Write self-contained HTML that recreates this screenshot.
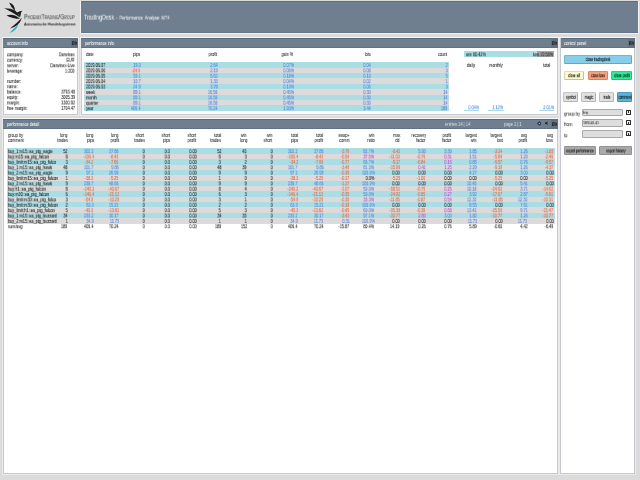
<!DOCTYPE html><html><head><meta charset="utf-8"><style>
html,body{margin:0;padding:0;width:640px;height:480px;overflow:hidden;background:#dcdbdb;font-family:"Liberation Sans", sans-serif;}
.b{position:absolute;}
.t{position:absolute;top:0;white-space:nowrap;line-height:8px;height:8px;will-change:transform;-webkit-text-stroke:0.05px currentColor;}
.r{text-align:right;}
.c{text-align:center;}
</style></head><body>
<div class="b" style="left:80px;top:1px;width:559px;height:33px;background:#f2f2f2"></div>
<div class="b" style="left:81px;top:1px;width:557px;height:32px;background:#6f7f8f"></div>
<div class="b" style="left:81px;top:1px;width:557px;height:1px;background:#607080"></div>
<div class="b" style="left:81px;top:32px;width:557px;height:1px;background:#66768a"></div>
<div class="t" style="left:84.2px;color:#eef0f2;font-size:8.1px;transform:translateY(13.60px) scaleX(0.66);transform-origin:0 50%;-webkit-text-stroke:0.05px currentColor;">TradingDesk</div>
<div class="t" style="left:116.2px;color:#eef0f2;font-size:5.9px;transform:translateY(13.60px) scaleX(0.7);transform-origin:0 50%;-webkit-text-stroke:0.05px currentColor;word-spacing:1.2px">-&nbsp;Performance Analyse MT4</div>
<svg class="b" style="left:2px;top:0px" width="24" height="36" viewBox="0 0 320 480">
<path d="M95,33 Q178,60 172,148 Q118,96 95,33Z" fill="#1c1c1c"/>
<path d="M31,111 Q208,108 240,234 Q168,182 31,111Z" fill="#1c1c1c"/>
<path d="M59,205 Q160,176 240,250 Q144,250 59,205Z" fill="#1c1c1c"/>
<path d="M200,166 Q236,142 272,142 Q252,160 250,188 Q248,212 240,232 Q228,196 200,166Z" fill="#1c1c1c"/>
<path d="M266,238 Q200,310 106,380 Q232,352 266,238Z" fill="#1c1c1c"/>
<path d="M218,328 Q160,378 100,440 Q192,414 218,328Z" fill="#20aebf"/>
</svg>
<div class="t" style="left:24.1px;color:#484848;font-size:6.9px;transform:translateY(13.20px) scaleX(0.78);transform-origin:0 50%;-webkit-text-stroke:0.05px currentColor;">P<span style="font-size:4.6px">HOENIX</span>T<span style="font-size:4.6px">RADING</span>/G<span style="font-size:4.6px">ROUP</span></div>
<div class="t" style="left:24.2px;color:#1a1a1a;font-size:4.2px;transform:translateY(20.50px) scaleX(0.895);transform-origin:0 50%;-webkit-text-stroke:0.08px #1a1a1a;">Automatische Handelssysteme</div>
<div class="b" style="left:2px;top:37px;width:77px;height:79px;background:#eaeaea"></div>
<div class="b" style="left:2px;top:37px;width:77px;height:1px;background:#f6f6f6"></div>
<div class="b" style="left:3px;top:38px;width:75px;height:77px;background:#fff;box-sizing:border-box;border:1px solid #c6cad0"></div>
<div class="b" style="left:3px;top:38px;width:75px;height:9.5px;background:#6f7f8f"></div>
<div class="b" style="left:3px;top:38px;width:75px;height:1px;background:#5b6a7b"></div>
<div class="b" style="left:3px;top:46.6px;width:75px;height:0.9px;background:#627182"></div>
<div class="t" style="left:7px;color:#f2f5f8;font-size:5.4px;transform:translateY(39.00px) scaleX(0.715);transform-origin:0 50%;-webkit-text-stroke:0.04px currentColor;">account info</div>
<div class="b" style="left:71px;top:38px;width:7px;height:9.5px;background:#627080"></div>
<svg class="b" style="left:71.6px;top:40.9px" width="5" height="4.3" viewBox="0 0 5.5 5" preserveAspectRatio="none"><path d="M0.5 4.5V0.6h1.8l0.5 0.6h2v1" fill="none" stroke="#15191e" stroke-width="0.75"/><path d="M0.5 4.5L1.3 2.2H5.2L4.4 4.5Z" fill="#56636f" stroke="#15191e" stroke-width="0.7"/></svg>
<div class="t" style="left:7px;color:#151515;font-size:5.0px;transform:translateY(50.30px) scaleX(0.77);transform-origin:0 50%;">company:</div>
<div class="t r" style="right:565.00px;color:#151515;font-size:5.0px;transform:translateY(50.30px) scaleX(0.77);transform-origin:100% 50%;">Darwinex</div>
<div class="t" style="left:7px;color:#151515;font-size:5.0px;transform:translateY(55.70px) scaleX(0.77);transform-origin:0 50%;">currency:</div>
<div class="t r" style="right:565.00px;color:#151515;font-size:5.0px;transform:translateY(55.70px) scaleX(0.77);transform-origin:100% 50%;">EUR</div>
<div class="t" style="left:7px;color:#151515;font-size:5.0px;transform:translateY(61.20px) scaleX(0.77);transform-origin:0 50%;">server:</div>
<div class="t r" style="right:565.00px;color:#151515;font-size:5.0px;transform:translateY(61.20px) scaleX(0.77);transform-origin:100% 50%;">Darwinex-Live</div>
<div class="t" style="left:7px;color:#151515;font-size:5.0px;transform:translateY(66.70px) scaleX(0.77);transform-origin:0 50%;">leverage:</div>
<div class="t r" style="right:565.00px;color:#151515;font-size:5.0px;transform:translateY(66.70px) scaleX(0.77);transform-origin:100% 50%;">1:200</div>
<div class="t" style="left:7px;color:#151515;font-size:5.0px;transform:translateY(77.00px) scaleX(0.77);transform-origin:0 50%;">number:</div>
<div class="t" style="left:7px;color:#151515;font-size:5.0px;transform:translateY(82.20px) scaleX(0.77);transform-origin:0 50%;">name:</div>
<div class="t" style="left:7px;color:#151515;font-size:5.0px;transform:translateY(87.60px) scaleX(0.77);transform-origin:0 50%;">balance:</div>
<div class="t r" style="right:565.00px;color:#151515;font-size:5.0px;transform:translateY(87.60px) scaleX(0.77);transform-origin:100% 50%;">3793.48</div>
<div class="t" style="left:7px;color:#151515;font-size:5.0px;transform:translateY(93.00px) scaleX(0.77);transform-origin:0 50%;">equity:</div>
<div class="t r" style="right:565.00px;color:#151515;font-size:5.0px;transform:translateY(93.00px) scaleX(0.77);transform-origin:100% 50%;">3005.39</div>
<div class="t" style="left:7px;color:#151515;font-size:5.0px;transform:translateY(98.50px) scaleX(0.77);transform-origin:0 50%;">margin:</div>
<div class="t r" style="right:565.00px;color:#151515;font-size:5.0px;transform:translateY(98.50px) scaleX(0.77);transform-origin:100% 50%;">1300.92</div>
<div class="t" style="left:7px;color:#151515;font-size:5.0px;transform:translateY(104.00px) scaleX(0.77);transform-origin:0 50%;">free margin:</div>
<div class="t r" style="right:565.00px;color:#151515;font-size:5.0px;transform:translateY(104.00px) scaleX(0.77);transform-origin:100% 50%;">1704.47</div>
<div class="b" style="left:80px;top:37px;width:479px;height:79px;background:#eaeaea"></div>
<div class="b" style="left:80px;top:37px;width:479px;height:1px;background:#f6f6f6"></div>
<div class="b" style="left:81px;top:38px;width:477px;height:77px;background:#fff;box-sizing:border-box;border:1px solid #c6cad0"></div>
<div class="b" style="left:81px;top:38px;width:477px;height:9.5px;background:#6f7f8f"></div>
<div class="b" style="left:81px;top:38px;width:477px;height:1px;background:#5b6a7b"></div>
<div class="b" style="left:81px;top:46.6px;width:477px;height:0.9px;background:#627182"></div>
<div class="t" style="left:85px;color:#f2f5f8;font-size:5.4px;transform:translateY(39.00px) scaleX(0.715);transform-origin:0 50%;-webkit-text-stroke:0.04px currentColor;">performance info</div>
<div class="b" style="left:551px;top:38px;width:7px;height:9.5px;background:#627080"></div>
<svg class="b" style="left:551.6px;top:40.9px" width="5" height="4.3" viewBox="0 0 5.5 5" preserveAspectRatio="none"><path d="M0.5 4.5V0.6h1.8l0.5 0.6h2v1" fill="none" stroke="#15191e" stroke-width="0.75"/><path d="M0.5 4.5L1.3 2.2H5.2L4.4 4.5Z" fill="#56636f" stroke="#15191e" stroke-width="0.7"/></svg>
<div class="t" style="left:85.5px;color:#2a2a2a;font-size:5.0px;transform:translateY(50.00px) scaleX(0.77);transform-origin:0 50%;">date</div>
<div class="t r" style="right:499.40px;color:#2a2a2a;font-size:5.0px;transform:translateY(50.00px) scaleX(0.77);transform-origin:100% 50%;">pips</div>
<div class="t r" style="right:422.70px;color:#2a2a2a;font-size:5.0px;transform:translateY(50.00px) scaleX(0.77);transform-origin:100% 50%;">profit</div>
<div class="t r" style="right:346.30px;color:#2a2a2a;font-size:5.0px;transform:translateY(50.00px) scaleX(0.77);transform-origin:100% 50%;">gain %</div>
<div class="t r" style="right:269.50px;color:#2a2a2a;font-size:5.0px;transform:translateY(50.00px) scaleX(0.77);transform-origin:100% 50%;">lots</div>
<div class="t r" style="right:192.50px;color:#2a2a2a;font-size:5.0px;transform:translateY(50.00px) scaleX(0.77);transform-origin:100% 50%;">count</div>
<div class="b" style="left:84px;top:62.25px;width:365.25px;height:5.4px;background:#aadde4"></div>
<div class="b" style="left:84px;top:67.65px;width:365.25px;height:5.4px;background:#dcdada"></div>
<div class="b" style="left:84px;top:73.05px;width:365.25px;height:5.4px;background:#aadde4"></div>
<div class="b" style="left:84px;top:78.45px;width:365.25px;height:5.4px;background:#dcdada"></div>
<div class="b" style="left:84px;top:83.85px;width:365.25px;height:5.4px;background:#aadde4"></div>
<div class="b" style="left:84px;top:89.25px;width:365.25px;height:5.4px;background:#dcdada"></div>
<div class="b" style="left:84px;top:94.65px;width:365.25px;height:5.4px;background:#aadde4"></div>
<div class="b" style="left:84px;top:100.05px;width:365.25px;height:5.4px;background:#dcdada"></div>
<div class="b" style="left:84px;top:105.45px;width:365.25px;height:5.4px;background:#aadde4"></div>
<div class="t" style="left:85.5px;color:#151515;font-size:5.0px;transform:translateY(60.95px) scaleX(0.77);transform-origin:0 50%;">2019.06.07</div>
<div class="t r" style="right:499.40px;color:#4a7ddb;font-size:5.0px;transform:translateY(60.95px) scaleX(0.77);transform-origin:100% 50%;">19.0</div>
<div class="t r" style="right:422.70px;color:#4a7ddb;font-size:5.0px;transform:translateY(60.95px) scaleX(0.77);transform-origin:100% 50%;">2.64</div>
<div class="t r" style="right:346.30px;color:#4a7ddb;font-size:5.0px;transform:translateY(60.95px) scaleX(0.77);transform-origin:100% 50%;">0.07%</div>
<div class="t r" style="right:269.50px;color:#4a7ddb;font-size:5.0px;transform:translateY(60.95px) scaleX(0.77);transform-origin:100% 50%;">0.04</div>
<div class="t r" style="right:192.50px;color:#4a7ddb;font-size:5.0px;transform:translateY(60.95px) scaleX(0.77);transform-origin:100% 50%;">2</div>
<div class="t" style="left:85.5px;color:#151515;font-size:5.0px;transform:translateY(66.35px) scaleX(0.77);transform-origin:0 50%;">2019.06.06</div>
<div class="t r" style="right:499.40px;color:#e8603a;font-size:5.0px;transform:translateY(66.35px) scaleX(0.77);transform-origin:100% 50%;">-24.6</div>
<div class="t r" style="right:422.70px;color:#4a7ddb;font-size:5.0px;transform:translateY(66.35px) scaleX(0.77);transform-origin:100% 50%;">2.19</div>
<div class="t r" style="right:346.30px;color:#4a7ddb;font-size:5.0px;transform:translateY(66.35px) scaleX(0.77);transform-origin:100% 50%;">0.06%</div>
<div class="t r" style="right:269.50px;color:#4a7ddb;font-size:5.0px;transform:translateY(66.35px) scaleX(0.77);transform-origin:100% 50%;">0.08</div>
<div class="t r" style="right:192.50px;color:#4a7ddb;font-size:5.0px;transform:translateY(66.35px) scaleX(0.77);transform-origin:100% 50%;">3</div>
<div class="t" style="left:85.5px;color:#151515;font-size:5.0px;transform:translateY(71.75px) scaleX(0.77);transform-origin:0 50%;">2019.06.05</div>
<div class="t r" style="right:499.40px;color:#4a7ddb;font-size:5.0px;transform:translateY(71.75px) scaleX(0.77);transform-origin:100% 50%;">59.1</div>
<div class="t r" style="right:422.70px;color:#4a7ddb;font-size:5.0px;transform:translateY(71.75px) scaleX(0.77);transform-origin:100% 50%;">6.62</div>
<div class="t r" style="right:346.30px;color:#4a7ddb;font-size:5.0px;transform:translateY(71.75px) scaleX(0.77);transform-origin:100% 50%;">0.18%</div>
<div class="t r" style="right:269.50px;color:#4a7ddb;font-size:5.0px;transform:translateY(71.75px) scaleX(0.77);transform-origin:100% 50%;">0.10</div>
<div class="t r" style="right:192.50px;color:#4a7ddb;font-size:5.0px;transform:translateY(71.75px) scaleX(0.77);transform-origin:100% 50%;">5</div>
<div class="t" style="left:85.5px;color:#151515;font-size:5.0px;transform:translateY(77.15px) scaleX(0.77);transform-origin:0 50%;">2019.06.04</div>
<div class="t r" style="right:499.40px;color:#4a7ddb;font-size:5.0px;transform:translateY(77.15px) scaleX(0.77);transform-origin:100% 50%;">10.7</div>
<div class="t r" style="right:422.70px;color:#4a7ddb;font-size:5.0px;transform:translateY(77.15px) scaleX(0.77);transform-origin:100% 50%;">1.33</div>
<div class="t r" style="right:346.30px;color:#4a7ddb;font-size:5.0px;transform:translateY(77.15px) scaleX(0.77);transform-origin:100% 50%;">0.04%</div>
<div class="t r" style="right:269.50px;color:#4a7ddb;font-size:5.0px;transform:translateY(77.15px) scaleX(0.77);transform-origin:100% 50%;">0.02</div>
<div class="t r" style="right:192.50px;color:#4a7ddb;font-size:5.0px;transform:translateY(77.15px) scaleX(0.77);transform-origin:100% 50%;">1</div>
<div class="t" style="left:85.5px;color:#151515;font-size:5.0px;transform:translateY(82.55px) scaleX(0.77);transform-origin:0 50%;">2019.06.03</div>
<div class="t r" style="right:499.40px;color:#4a7ddb;font-size:5.0px;transform:translateY(82.55px) scaleX(0.77);transform-origin:100% 50%;">24.9</div>
<div class="t r" style="right:422.70px;color:#4a7ddb;font-size:5.0px;transform:translateY(82.55px) scaleX(0.77);transform-origin:100% 50%;">3.78</div>
<div class="t r" style="right:346.30px;color:#4a7ddb;font-size:5.0px;transform:translateY(82.55px) scaleX(0.77);transform-origin:100% 50%;">0.10%</div>
<div class="t r" style="right:269.50px;color:#4a7ddb;font-size:5.0px;transform:translateY(82.55px) scaleX(0.77);transform-origin:100% 50%;">0.06</div>
<div class="t r" style="right:192.50px;color:#4a7ddb;font-size:5.0px;transform:translateY(82.55px) scaleX(0.77);transform-origin:100% 50%;">3</div>
<div class="t" style="left:85.5px;color:#151515;font-size:5.0px;transform:translateY(87.95px) scaleX(0.77);transform-origin:0 50%;">week</div>
<div class="t r" style="right:499.40px;color:#4a7ddb;font-size:5.0px;transform:translateY(87.95px) scaleX(0.77);transform-origin:100% 50%;">89.1</div>
<div class="t r" style="right:422.70px;color:#4a7ddb;font-size:5.0px;transform:translateY(87.95px) scaleX(0.77);transform-origin:100% 50%;">16.56</div>
<div class="t r" style="right:346.30px;color:#4a7ddb;font-size:5.0px;transform:translateY(87.95px) scaleX(0.77);transform-origin:100% 50%;">0.45%</div>
<div class="t r" style="right:269.50px;color:#4a7ddb;font-size:5.0px;transform:translateY(87.95px) scaleX(0.77);transform-origin:100% 50%;">0.30</div>
<div class="t r" style="right:192.50px;color:#4a7ddb;font-size:5.0px;transform:translateY(87.95px) scaleX(0.77);transform-origin:100% 50%;">14</div>
<div class="t" style="left:85.5px;color:#151515;font-size:5.0px;transform:translateY(93.35px) scaleX(0.77);transform-origin:0 50%;">month</div>
<div class="t r" style="right:499.40px;color:#4a7ddb;font-size:5.0px;transform:translateY(93.35px) scaleX(0.77);transform-origin:100% 50%;">89.1</div>
<div class="t r" style="right:422.70px;color:#4a7ddb;font-size:5.0px;transform:translateY(93.35px) scaleX(0.77);transform-origin:100% 50%;">16.56</div>
<div class="t r" style="right:346.30px;color:#4a7ddb;font-size:5.0px;transform:translateY(93.35px) scaleX(0.77);transform-origin:100% 50%;">0.45%</div>
<div class="t r" style="right:269.50px;color:#4a7ddb;font-size:5.0px;transform:translateY(93.35px) scaleX(0.77);transform-origin:100% 50%;">0.30</div>
<div class="t r" style="right:192.50px;color:#4a7ddb;font-size:5.0px;transform:translateY(93.35px) scaleX(0.77);transform-origin:100% 50%;">14</div>
<div class="t" style="left:85.5px;color:#151515;font-size:5.0px;transform:translateY(98.75px) scaleX(0.77);transform-origin:0 50%;">quarter</div>
<div class="t r" style="right:499.40px;color:#4a7ddb;font-size:5.0px;transform:translateY(98.75px) scaleX(0.77);transform-origin:100% 50%;">89.1</div>
<div class="t r" style="right:422.70px;color:#4a7ddb;font-size:5.0px;transform:translateY(98.75px) scaleX(0.77);transform-origin:100% 50%;">16.56</div>
<div class="t r" style="right:346.30px;color:#4a7ddb;font-size:5.0px;transform:translateY(98.75px) scaleX(0.77);transform-origin:100% 50%;">0.45%</div>
<div class="t r" style="right:269.50px;color:#4a7ddb;font-size:5.0px;transform:translateY(98.75px) scaleX(0.77);transform-origin:100% 50%;">0.30</div>
<div class="t r" style="right:192.50px;color:#4a7ddb;font-size:5.0px;transform:translateY(98.75px) scaleX(0.77);transform-origin:100% 50%;">14</div>
<div class="t" style="left:85.5px;color:#151515;font-size:5.0px;transform:translateY(104.15px) scaleX(0.77);transform-origin:0 50%;">year</div>
<div class="t r" style="right:499.40px;color:#4a7ddb;font-size:5.0px;transform:translateY(104.15px) scaleX(0.77);transform-origin:100% 50%;">406.4</div>
<div class="t r" style="right:422.70px;color:#4a7ddb;font-size:5.0px;transform:translateY(104.15px) scaleX(0.77);transform-origin:100% 50%;">70.24</div>
<div class="t r" style="right:346.30px;color:#4a7ddb;font-size:5.0px;transform:translateY(104.15px) scaleX(0.77);transform-origin:100% 50%;">1.93%</div>
<div class="t r" style="right:269.50px;color:#4a7ddb;font-size:5.0px;transform:translateY(104.15px) scaleX(0.77);transform-origin:100% 50%;">3.44</div>
<div class="t r" style="right:192.50px;color:#4a7ddb;font-size:5.0px;transform:translateY(104.15px) scaleX(0.77);transform-origin:100% 50%;">189</div>
<div class="b" style="left:463.75px;top:51.2px;width:90.1px;height:6.1px;background:#a9a9a9"></div>
<div class="b" style="left:463.75px;top:51.2px;width:73.0px;height:6.1px;background:#aadde4"></div>
<div class="t" style="left:465.5px;color:#151515;font-size:5.0px;transform:translateY(50.30px) scaleX(0.77);transform-origin:0 50%;">win 80.42%</div>
<div class="t r" style="right:86.50px;color:#151515;font-size:5.0px;transform:translateY(50.30px) scaleX(0.77);transform-origin:100% 50%;">lost 19.58%</div>
<div class="t c" style="left:420.70px;width:100px;color:#151515;font-size:5.0px;transform:translateY(60.90px) scaleX(0.77);transform-origin:50% 50%;">daily</div>
<div class="t c" style="left:446.00px;width:100px;color:#151515;font-size:5.0px;transform:translateY(60.90px) scaleX(0.77);transform-origin:50% 50%;">monthly</div>
<div class="t r" style="right:90.00px;color:#151515;font-size:5.0px;transform:translateY(60.90px) scaleX(0.77);transform-origin:100% 50%;">total</div>
<div class="t r" style="right:160.80px;color:#4a7ddb;font-size:5.0px;transform:translateY(103.30px) scaleX(0.77);transform-origin:100% 50%;">0.04%</div>
<div class="t r" style="right:136.60px;color:#4a7ddb;font-size:5.0px;transform:translateY(103.30px) scaleX(0.77);transform-origin:100% 50%;">1.12%</div>
<div class="t r" style="right:85.80px;color:#4a7ddb;font-size:5.0px;transform:translateY(103.30px) scaleX(0.77);transform-origin:100% 50%;">2.01%</div>
<div class="b" style="left:463.75px;top:109.6px;width:15.5px;height:0.6px;background:#a9dbe6"></div>
<div class="b" style="left:488px;top:109.6px;width:15.5px;height:0.6px;background:#a9dbe6"></div>
<div class="b" style="left:538.5px;top:109.6px;width:15.5px;height:0.6px;background:#a9dbe6"></div>
<div class="b" style="left:559px;top:37px;width:77px;height:438px;background:#eaeaea"></div>
<div class="b" style="left:559px;top:37px;width:77px;height:1px;background:#f6f6f6"></div>
<div class="b" style="left:560px;top:38px;width:75px;height:436px;background:#fff;box-sizing:border-box;border:1px solid #c6cad0"></div>
<div class="b" style="left:561px;top:38px;width:74px;height:9.5px;background:#6f7f8f"></div>
<div class="b" style="left:561px;top:38px;width:74px;height:1px;background:#5b6a7b"></div>
<div class="b" style="left:561px;top:46.6px;width:74px;height:0.9px;background:#627182"></div>
<div class="t" style="left:564px;color:#f2f5f8;font-size:5.4px;transform:translateY(39.00px) scaleX(0.715);transform-origin:0 50%;-webkit-text-stroke:0.04px currentColor;">control panel</div>
<div class="b" style="left:628px;top:38px;width:7px;height:9.5px;background:#627080"></div>
<svg class="b" style="left:628.6px;top:40.9px" width="5" height="4.3" viewBox="0 0 5.5 5" preserveAspectRatio="none"><path d="M0.5 4.5V0.6h1.8l0.5 0.6h2v1" fill="none" stroke="#15191e" stroke-width="0.75"/><path d="M0.5 4.5L1.3 2.2H5.2L4.4 4.5Z" fill="#56636f" stroke="#15191e" stroke-width="0.7"/></svg>
<div class="b" style="left:563.7px;top:54.7px;width:68.09999999999991px;height:9.199999999999996px;background:#87ceeb;box-sizing:border-box;border:1px solid #6aa6c2;border-top-color:rgba(0,0,0,0.12);border-left-color:rgba(0,0,0,0.15);border-radius:1.2px"></div>
<div class="t c" style="left:547.75px;width:100px;color:#151515;font-size:4.9px;transform:translateY(56.10px) scaleX(0.65);transform-origin:50% 50%;-webkit-text-stroke:0.12px currentColor;">close tradingdesk</div>
<div class="b" style="left:563.7px;top:70.6px;width:20.5px;height:9.600000000000009px;background:#fffacd;box-sizing:border-box;border:1px solid #c0c0b0;border-top-color:rgba(0,0,0,0.12);border-left-color:rgba(0,0,0,0.15);border-radius:1.2px"></div>
<div class="t c" style="left:523.95px;width:100px;color:#151515;font-size:4.9px;transform:translateY(72.20px) scaleX(0.65);transform-origin:50% 50%;-webkit-text-stroke:0.12px currentColor;">close all</div>
<div class="b" style="left:587.6px;top:70.6px;width:20.5px;height:9.600000000000009px;background:#f8a07a;box-sizing:border-box;border:1px solid #c08a70;border-top-color:rgba(0,0,0,0.12);border-left-color:rgba(0,0,0,0.15);border-radius:1.2px"></div>
<div class="t c" style="left:547.85px;width:100px;color:#151515;font-size:4.9px;transform:translateY(72.20px) scaleX(0.65);transform-origin:50% 50%;-webkit-text-stroke:0.12px currentColor;">close loss</div>
<div class="b" style="left:611.2px;top:70.6px;width:20.59999999999991px;height:9.600000000000009px;background:#2eec96;box-sizing:border-box;border:1px solid #40b080;border-top-color:rgba(0,0,0,0.12);border-left-color:rgba(0,0,0,0.15);border-radius:1.2px"></div>
<div class="t c" style="left:571.50px;width:100px;color:#151515;font-size:4.9px;transform:translateY(72.20px) scaleX(0.65);transform-origin:50% 50%;-webkit-text-stroke:0.12px currentColor;">close profit</div>
<div class="b" style="left:563.3px;top:92.3px;width:14.900000000000091px;height:9.5px;background:#e2e2e2;box-sizing:border-box;border:1px solid #b4b4b4;border-top-color:rgba(0,0,0,0.12);border-left-color:rgba(0,0,0,0.15);border-radius:1.2px"></div>
<div class="t c" style="left:520.75px;width:100px;color:#151515;font-size:4.9px;transform:translateY(93.85px) scaleX(0.65);transform-origin:50% 50%;-webkit-text-stroke:0.12px currentColor;">symbol</div>
<div class="b" style="left:581.2px;top:92.3px;width:14.599999999999909px;height:9.5px;background:#e2e2e2;box-sizing:border-box;border:1px solid #b4b4b4;border-top-color:rgba(0,0,0,0.12);border-left-color:rgba(0,0,0,0.15);border-radius:1.2px"></div>
<div class="t c" style="left:538.50px;width:100px;color:#151515;font-size:4.9px;transform:translateY(93.85px) scaleX(0.65);transform-origin:50% 50%;-webkit-text-stroke:0.12px currentColor;">magic</div>
<div class="b" style="left:599.3px;top:92.3px;width:14.600000000000023px;height:9.5px;background:#e2e2e2;box-sizing:border-box;border:1px solid #b4b4b4;border-top-color:rgba(0,0,0,0.12);border-left-color:rgba(0,0,0,0.15);border-radius:1.2px"></div>
<div class="t c" style="left:556.60px;width:100px;color:#151515;font-size:4.9px;transform:translateY(93.85px) scaleX(0.65);transform-origin:50% 50%;-webkit-text-stroke:0.12px currentColor;">trade</div>
<div class="b" style="left:617.25px;top:92.3px;width:14.549999999999955px;height:9.5px;background:#58b2dc;box-sizing:border-box;border:1px solid #4a94b8;border-top-color:rgba(0,0,0,0.12);border-left-color:rgba(0,0,0,0.15);border-radius:1.2px"></div>
<div class="t c" style="left:574.52px;width:100px;color:#151515;font-size:4.9px;transform:translateY(93.85px) scaleX(0.65);transform-origin:50% 50%;-webkit-text-stroke:0.12px currentColor;">comment</div>
<div class="t" style="left:563.6px;color:#333;font-size:5.4px;transform:translateY(109.60px) scaleX(0.77);transform-origin:0 50%;">group by</div>
<div class="b" style="left:581.6px;top:108.9px;width:41.3px;height:7.5px;background:#dedede;box-sizing:border-box;border:0.6px solid #a8a8a8;border-radius:1px"></div>
<div class="t" style="left:582.9px;color:#151515;font-size:4.3px;transform:translateY(108.65px) scaleX(0.74);transform-origin:0 50%;">buy</div>
<div class="b" style="left:626.1px;top:109.60000000000001px;width:4.8px;height:5.3px;background:#f0f0f0;box-sizing:border-box;border:1.1px solid #2a2a2a;border-radius:0.6px"></div>
<div class="b" style="left:628.05px;top:111.2px;width:0.9px;height:2.1px;background:#333"></div>
<div class="t" style="left:563.6px;color:#333;font-size:5.4px;transform:translateY(120.10px) scaleX(0.77);transform-origin:0 50%;">from</div>
<div class="b" style="left:581.6px;top:119.4px;width:41.3px;height:7.5px;background:#dedede;box-sizing:border-box;border:0.6px solid #a8a8a8;border-radius:1px"></div>
<div class="t" style="left:582.9px;color:#151515;font-size:4.3px;transform:translateY(119.15px) scaleX(0.74);transform-origin:0 50%;">1970.01.01</div>
<div class="b" style="left:626.1px;top:120.10000000000001px;width:4.8px;height:5.3px;background:#f0f0f0;box-sizing:border-box;border:1.1px solid #2a2a2a;border-radius:0.6px"></div>
<div class="b" style="left:628.05px;top:121.7px;width:0.9px;height:2.1px;background:#333"></div>
<div class="t" style="left:563.6px;color:#333;font-size:5.4px;transform:translateY(131.30px) scaleX(0.77);transform-origin:0 50%;">to</div>
<div class="b" style="left:581.6px;top:130.2px;width:41.3px;height:7.5px;background:#dedede;box-sizing:border-box;border:0.6px solid #a8a8a8;border-radius:1px"></div>
<div class="b" style="left:626.1px;top:130.89999999999998px;width:4.8px;height:5.3px;background:#f0f0f0;box-sizing:border-box;border:1.1px solid #2a2a2a;border-radius:0.6px"></div>
<div class="b" style="left:628.05px;top:132.5px;width:0.9px;height:2.1px;background:#333"></div>
<div class="b" style="left:563.9px;top:145.9px;width:31.899999999999977px;height:9.5px;background:#a9a9a9;box-sizing:border-box;border:1px solid #909090;border-top-color:rgba(0,0,0,0.12);border-left-color:rgba(0,0,0,0.15);border-radius:1.2px"></div>
<div class="t c" style="left:529.85px;width:100px;color:#151515;font-size:4.9px;transform:translateY(147.45px) scaleX(0.65);transform-origin:50% 50%;-webkit-text-stroke:0.12px currentColor;">export performance</div>
<div class="b" style="left:599.3px;top:145.9px;width:32.60000000000002px;height:9.5px;background:#a9a9a9;box-sizing:border-box;border:1px solid #909090;border-top-color:rgba(0,0,0,0.12);border-left-color:rgba(0,0,0,0.15);border-radius:1.2px"></div>
<div class="t c" style="left:565.60px;width:100px;color:#151515;font-size:4.9px;transform:translateY(147.45px) scaleX(0.65);transform-origin:50% 50%;-webkit-text-stroke:0.12px currentColor;">export history</div>
<div class="b" style="left:2px;top:118px;width:557px;height:357px;background:#eaeaea"></div>
<div class="b" style="left:2px;top:118px;width:557px;height:1px;background:#f6f6f6"></div>
<div class="b" style="left:3px;top:119px;width:555px;height:355px;background:#fff;box-sizing:border-box;border:1px solid #c6cad0"></div>
<div class="b" style="left:3px;top:119px;width:555px;height:9.5px;background:#6f7f8f"></div>
<div class="b" style="left:3px;top:119px;width:555px;height:1px;background:#5b6a7b"></div>
<div class="b" style="left:3px;top:127.6px;width:555px;height:0.9px;background:#627182"></div>
<div class="t" style="left:7px;color:#f2f5f8;font-size:5.4px;transform:translateY(120.00px) scaleX(0.715);transform-origin:0 50%;-webkit-text-stroke:0.04px currentColor;">performance detail</div>
<div class="b" style="left:551px;top:119px;width:7px;height:9.5px;background:#627080"></div>
<svg class="b" style="left:551.6px;top:121.9px" width="5" height="4.3" viewBox="0 0 5.5 5" preserveAspectRatio="none"><path d="M0.5 4.5V0.6h1.8l0.5 0.6h2v1" fill="none" stroke="#15191e" stroke-width="0.75"/><path d="M0.5 4.5L1.3 2.2H5.2L4.4 4.5Z" fill="#56636f" stroke="#15191e" stroke-width="0.7"/></svg>
<div class="t" style="left:445px;color:#dfe4ea;font-size:5.2px;transform:translateY(119.90px) scaleX(0.77);transform-origin:0 50%;-webkit-text-stroke:0;">entries 14 | 14</div>
<div class="t" style="left:504.2px;color:#dfe4ea;font-size:5.2px;transform:translateY(119.90px) scaleX(0.77);transform-origin:0 50%;-webkit-text-stroke:0;">page 1 | 1</div>
<svg class="b" style="left:536.6px;top:121px" width="4.8" height="5" viewBox="0 0 6 6"><path d="M3 0.1L4.3 1.5L5.9 3L4.3 4.5L3 5.9L1.7 4.5L0.1 3L1.7 1.5Z" fill="#1e242c"/><circle cx="3" cy="3" r="1.05" fill="#aab4be"/></svg>
<svg class="b" style="left:544.4px;top:121.3px" width="4.4" height="4.4" viewBox="0 0 5 5"><path d="M4.3 1.2L1.2 2.5L4.3 3.8" fill="none" stroke="#1e242c" stroke-width="1.1" stroke-linejoin="round"/><circle cx="3.2" cy="2.5" r="0.6" fill="#1e242c"/></svg>
<div class="t" style="left:8px;color:#2a2a2a;font-size:5.0px;transform:translateY(131.00px) scaleX(0.77);transform-origin:0 50%;">group by</div>
<div class="t" style="left:8px;color:#2a2a2a;font-size:5.0px;transform:translateY(136.00px) scaleX(0.77);transform-origin:0 50%;">comment</div>
<div class="t r" style="right:572.50px;color:#2a2a2a;font-size:5.0px;transform:translateY(131.00px) scaleX(0.77);transform-origin:100% 50%;">long</div>
<div class="t r" style="right:572.50px;color:#2a2a2a;font-size:5.0px;transform:translateY(136.00px) scaleX(0.77);transform-origin:100% 50%;">trades</div>
<div class="t r" style="right:546.25px;color:#2a2a2a;font-size:5.0px;transform:translateY(131.00px) scaleX(0.77);transform-origin:100% 50%;">long</div>
<div class="t r" style="right:546.25px;color:#2a2a2a;font-size:5.0px;transform:translateY(136.00px) scaleX(0.77);transform-origin:100% 50%;">pips</div>
<div class="t r" style="right:521.25px;color:#2a2a2a;font-size:5.0px;transform:translateY(131.00px) scaleX(0.77);transform-origin:100% 50%;">long</div>
<div class="t r" style="right:521.25px;color:#2a2a2a;font-size:5.0px;transform:translateY(136.00px) scaleX(0.77);transform-origin:100% 50%;">profit</div>
<div class="t r" style="right:495.50px;color:#2a2a2a;font-size:5.0px;transform:translateY(131.00px) scaleX(0.77);transform-origin:100% 50%;">short</div>
<div class="t r" style="right:495.50px;color:#2a2a2a;font-size:5.0px;transform:translateY(136.00px) scaleX(0.77);transform-origin:100% 50%;">trades</div>
<div class="t r" style="right:470.00px;color:#2a2a2a;font-size:5.0px;transform:translateY(131.00px) scaleX(0.77);transform-origin:100% 50%;">short</div>
<div class="t r" style="right:470.00px;color:#2a2a2a;font-size:5.0px;transform:translateY(136.00px) scaleX(0.77);transform-origin:100% 50%;">pips</div>
<div class="t r" style="right:443.75px;color:#2a2a2a;font-size:5.0px;transform:translateY(131.00px) scaleX(0.77);transform-origin:100% 50%;">short</div>
<div class="t r" style="right:443.75px;color:#2a2a2a;font-size:5.0px;transform:translateY(136.00px) scaleX(0.77);transform-origin:100% 50%;">profit</div>
<div class="t r" style="right:418.75px;color:#2a2a2a;font-size:5.0px;transform:translateY(131.00px) scaleX(0.77);transform-origin:100% 50%;">total</div>
<div class="t r" style="right:418.75px;color:#2a2a2a;font-size:5.0px;transform:translateY(136.00px) scaleX(0.77);transform-origin:100% 50%;">trades</div>
<div class="t r" style="right:393.00px;color:#2a2a2a;font-size:5.0px;transform:translateY(131.00px) scaleX(0.77);transform-origin:100% 50%;">win</div>
<div class="t r" style="right:393.00px;color:#2a2a2a;font-size:5.0px;transform:translateY(136.00px) scaleX(0.77);transform-origin:100% 50%;">long</div>
<div class="t r" style="right:367.50px;color:#2a2a2a;font-size:5.0px;transform:translateY(131.00px) scaleX(0.77);transform-origin:100% 50%;">win</div>
<div class="t r" style="right:367.50px;color:#2a2a2a;font-size:5.0px;transform:translateY(136.00px) scaleX(0.77);transform-origin:100% 50%;">short</div>
<div class="t r" style="right:342.00px;color:#2a2a2a;font-size:5.0px;transform:translateY(131.00px) scaleX(0.77);transform-origin:100% 50%;">total</div>
<div class="t r" style="right:342.00px;color:#2a2a2a;font-size:5.0px;transform:translateY(136.00px) scaleX(0.77);transform-origin:100% 50%;">pips</div>
<div class="t r" style="right:316.75px;color:#2a2a2a;font-size:5.0px;transform:translateY(131.00px) scaleX(0.77);transform-origin:100% 50%;">total</div>
<div class="t r" style="right:316.75px;color:#2a2a2a;font-size:5.0px;transform:translateY(136.00px) scaleX(0.77);transform-origin:100% 50%;">profit</div>
<div class="t r" style="right:290.75px;color:#2a2a2a;font-size:5.0px;transform:translateY(131.00px) scaleX(0.77);transform-origin:100% 50%;">swap+</div>
<div class="t r" style="right:290.75px;color:#2a2a2a;font-size:5.0px;transform:translateY(136.00px) scaleX(0.77);transform-origin:100% 50%;">comm</div>
<div class="t r" style="right:265.50px;color:#2a2a2a;font-size:5.0px;transform:translateY(131.00px) scaleX(0.77);transform-origin:100% 50%;">win</div>
<div class="t r" style="right:265.50px;color:#2a2a2a;font-size:5.0px;transform:translateY(136.00px) scaleX(0.77);transform-origin:100% 50%;">ratio</div>
<div class="t r" style="right:240.00px;color:#2a2a2a;font-size:5.0px;transform:translateY(131.00px) scaleX(0.77);transform-origin:100% 50%;">max</div>
<div class="t r" style="right:240.00px;color:#2a2a2a;font-size:5.0px;transform:translateY(136.00px) scaleX(0.77);transform-origin:100% 50%;">dd</div>
<div class="t r" style="right:214.25px;color:#2a2a2a;font-size:5.0px;transform:translateY(131.00px) scaleX(0.77);transform-origin:100% 50%;">recovery</div>
<div class="t r" style="right:214.25px;color:#2a2a2a;font-size:5.0px;transform:translateY(136.00px) scaleX(0.77);transform-origin:100% 50%;">factor</div>
<div class="t r" style="right:188.75px;color:#2a2a2a;font-size:5.0px;transform:translateY(131.00px) scaleX(0.77);transform-origin:100% 50%;">profit</div>
<div class="t r" style="right:188.75px;color:#2a2a2a;font-size:5.0px;transform:translateY(136.00px) scaleX(0.77);transform-origin:100% 50%;">factor</div>
<div class="t r" style="right:163.00px;color:#2a2a2a;font-size:5.0px;transform:translateY(131.00px) scaleX(0.77);transform-origin:100% 50%;">largest</div>
<div class="t r" style="right:163.00px;color:#2a2a2a;font-size:5.0px;transform:translateY(136.00px) scaleX(0.77);transform-origin:100% 50%;">win</div>
<div class="t r" style="right:137.50px;color:#2a2a2a;font-size:5.0px;transform:translateY(131.00px) scaleX(0.77);transform-origin:100% 50%;">largest</div>
<div class="t r" style="right:137.50px;color:#2a2a2a;font-size:5.0px;transform:translateY(136.00px) scaleX(0.77);transform-origin:100% 50%;">lost</div>
<div class="t r" style="right:112.50px;color:#2a2a2a;font-size:5.0px;transform:translateY(131.00px) scaleX(0.77);transform-origin:100% 50%;">avg</div>
<div class="t r" style="right:112.50px;color:#2a2a2a;font-size:5.0px;transform:translateY(136.00px) scaleX(0.77);transform-origin:100% 50%;">profit</div>
<div class="t r" style="right:86.75px;color:#2a2a2a;font-size:5.0px;transform:translateY(131.00px) scaleX(0.77);transform-origin:100% 50%;">avg</div>
<div class="t r" style="right:86.75px;color:#2a2a2a;font-size:5.0px;transform:translateY(136.00px) scaleX(0.77);transform-origin:100% 50%;">loss</div>
<div class="b" style="left:7.0px;top:148.45px;width:547.8px;height:5.365px;background:#aadde4"></div>
<div class="b" style="left:7.0px;top:153.81px;width:547.8px;height:5.365px;background:#dcdada"></div>
<div class="b" style="left:7.0px;top:159.18px;width:547.8px;height:5.365px;background:#aadde4"></div>
<div class="b" style="left:7.0px;top:164.54px;width:547.8px;height:5.365px;background:#dcdada"></div>
<div class="b" style="left:7.0px;top:169.91px;width:547.8px;height:5.365px;background:#aadde4"></div>
<div class="b" style="left:7.0px;top:175.27px;width:547.8px;height:5.365px;background:#dcdada"></div>
<div class="b" style="left:7.0px;top:180.64px;width:547.8px;height:5.365px;background:#aadde4"></div>
<div class="b" style="left:7.0px;top:186.0px;width:547.8px;height:5.365px;background:#dcdada"></div>
<div class="b" style="left:7.0px;top:191.37px;width:547.8px;height:5.365px;background:#aadde4"></div>
<div class="b" style="left:7.0px;top:196.73px;width:547.8px;height:5.365px;background:#dcdada"></div>
<div class="b" style="left:7.0px;top:202.1px;width:547.8px;height:5.365px;background:#aadde4"></div>
<div class="b" style="left:7.0px;top:207.46px;width:547.8px;height:5.365px;background:#dcdada"></div>
<div class="b" style="left:7.0px;top:212.83px;width:547.8px;height:5.365px;background:#aadde4"></div>
<div class="b" style="left:7.0px;top:218.19px;width:547.8px;height:5.365px;background:#dcdada"></div>
<div class="t" style="left:8px;color:#151515;font-size:5.0px;transform:translateY(147.13px) scaleX(0.77);transform-origin:0 50%;">buy_1:m15::ea_ptg_eagle</div>
<div class="t r" style="right:572.50px;color:#151515;font-size:5.0px;transform:translateY(147.13px) scaleX(0.77);transform-origin:100% 50%;">52</div>
<div class="t r" style="right:546.25px;color:#4a7ddb;font-size:5.0px;transform:translateY(147.13px) scaleX(0.77);transform-origin:100% 50%;">302.2</div>
<div class="t r" style="right:521.25px;color:#4a7ddb;font-size:5.0px;transform:translateY(147.13px) scaleX(0.77);transform-origin:100% 50%;">37.86</div>
<div class="t r" style="right:495.50px;color:#151515;font-size:5.0px;transform:translateY(147.13px) scaleX(0.77);transform-origin:100% 50%;">0</div>
<div class="t r" style="right:470.00px;color:#151515;font-size:5.0px;transform:translateY(147.13px) scaleX(0.77);transform-origin:100% 50%;">0.0</div>
<div class="t r" style="right:443.75px;color:#151515;font-size:5.0px;transform:translateY(147.13px) scaleX(0.77);transform-origin:100% 50%;">0.00</div>
<div class="t r" style="right:418.75px;color:#151515;font-size:5.0px;transform:translateY(147.13px) scaleX(0.77);transform-origin:100% 50%;">52</div>
<div class="t r" style="right:393.00px;color:#151515;font-size:5.0px;transform:translateY(147.13px) scaleX(0.77);transform-origin:100% 50%;">43</div>
<div class="t r" style="right:367.50px;color:#151515;font-size:5.0px;transform:translateY(147.13px) scaleX(0.77);transform-origin:100% 50%;">0</div>
<div class="t r" style="right:342.00px;color:#4a7ddb;font-size:5.0px;transform:translateY(147.13px) scaleX(0.77);transform-origin:100% 50%;">302.2</div>
<div class="t r" style="right:316.75px;color:#4a7ddb;font-size:5.0px;transform:translateY(147.13px) scaleX(0.77);transform-origin:100% 50%;">37.86</div>
<div class="t r" style="right:290.75px;color:#e8603a;font-size:5.0px;transform:translateY(147.13px) scaleX(0.77);transform-origin:100% 50%;">-3.76</div>
<div class="t r" style="right:265.50px;color:#4a7ddb;font-size:5.0px;transform:translateY(147.13px) scaleX(0.77);transform-origin:100% 50%;">82.7%</div>
<div class="t r" style="right:240.00px;color:#e8603a;font-size:5.0px;transform:translateY(147.13px) scaleX(0.77);transform-origin:100% 50%;">-6.42</div>
<div class="t r" style="right:214.25px;color:#4a7ddb;font-size:5.0px;transform:translateY(147.13px) scaleX(0.77);transform-origin:100% 50%;">5.90</div>
<div class="t r" style="right:188.75px;color:#4a7ddb;font-size:5.0px;transform:translateY(147.13px) scaleX(0.77);transform-origin:100% 50%;">3.30</div>
<div class="t r" style="right:163.00px;color:#4a7ddb;font-size:5.0px;transform:translateY(147.13px) scaleX(0.77);transform-origin:100% 50%;">1.85</div>
<div class="t r" style="right:137.50px;color:#e8603a;font-size:5.0px;transform:translateY(147.13px) scaleX(0.77);transform-origin:100% 50%;">-3.24</div>
<div class="t r" style="right:112.50px;color:#4a7ddb;font-size:5.0px;transform:translateY(147.13px) scaleX(0.77);transform-origin:100% 50%;">1.26</div>
<div class="t r" style="right:86.75px;color:#e8603a;font-size:5.0px;transform:translateY(147.13px) scaleX(0.77);transform-origin:100% 50%;">-1.83</div>
<div class="t" style="left:8px;color:#151515;font-size:5.0px;transform:translateY(152.50px) scaleX(0.77);transform-origin:0 50%;">buy:m15::ea_ptg_falcon</div>
<div class="t r" style="right:572.50px;color:#151515;font-size:5.0px;transform:translateY(152.50px) scaleX(0.77);transform-origin:100% 50%;">8</div>
<div class="t r" style="right:546.25px;color:#e8603a;font-size:5.0px;transform:translateY(152.50px) scaleX(0.77);transform-origin:100% 50%;">-106.4</div>
<div class="t r" style="right:521.25px;color:#e8603a;font-size:5.0px;transform:translateY(152.50px) scaleX(0.77);transform-origin:100% 50%;">-8.43</div>
<div class="t r" style="right:495.50px;color:#151515;font-size:5.0px;transform:translateY(152.50px) scaleX(0.77);transform-origin:100% 50%;">0</div>
<div class="t r" style="right:470.00px;color:#151515;font-size:5.0px;transform:translateY(152.50px) scaleX(0.77);transform-origin:100% 50%;">0.0</div>
<div class="t r" style="right:443.75px;color:#151515;font-size:5.0px;transform:translateY(152.50px) scaleX(0.77);transform-origin:100% 50%;">0.00</div>
<div class="t r" style="right:418.75px;color:#151515;font-size:5.0px;transform:translateY(152.50px) scaleX(0.77);transform-origin:100% 50%;">8</div>
<div class="t r" style="right:393.00px;color:#151515;font-size:5.0px;transform:translateY(152.50px) scaleX(0.77);transform-origin:100% 50%;">3</div>
<div class="t r" style="right:367.50px;color:#151515;font-size:5.0px;transform:translateY(152.50px) scaleX(0.77);transform-origin:100% 50%;">0</div>
<div class="t r" style="right:342.00px;color:#e8603a;font-size:5.0px;transform:translateY(152.50px) scaleX(0.77);transform-origin:100% 50%;">-106.4</div>
<div class="t r" style="right:316.75px;color:#e8603a;font-size:5.0px;transform:translateY(152.50px) scaleX(0.77);transform-origin:100% 50%;">-8.43</div>
<div class="t r" style="right:290.75px;color:#e8603a;font-size:5.0px;transform:translateY(152.50px) scaleX(0.77);transform-origin:100% 50%;">-0.54</div>
<div class="t r" style="right:265.50px;color:#cc3cc0;font-size:5.0px;transform:translateY(152.50px) scaleX(0.77);transform-origin:100% 50%;">37.5%</div>
<div class="t r" style="right:240.00px;color:#e8603a;font-size:5.0px;transform:translateY(152.50px) scaleX(0.77);transform-origin:100% 50%;">-11.03</div>
<div class="t r" style="right:214.25px;color:#e8603a;font-size:5.0px;transform:translateY(152.50px) scaleX(0.77);transform-origin:100% 50%;">-0.76</div>
<div class="t r" style="right:188.75px;color:#cc3cc0;font-size:5.0px;transform:translateY(152.50px) scaleX(0.77);transform-origin:100% 50%;">0.31</div>
<div class="t r" style="right:163.00px;color:#4a7ddb;font-size:5.0px;transform:translateY(152.50px) scaleX(0.77);transform-origin:100% 50%;">1.51</div>
<div class="t r" style="right:137.50px;color:#e8603a;font-size:5.0px;transform:translateY(152.50px) scaleX(0.77);transform-origin:100% 50%;">-5.84</div>
<div class="t r" style="right:112.50px;color:#4a7ddb;font-size:5.0px;transform:translateY(152.50px) scaleX(0.77);transform-origin:100% 50%;">1.20</div>
<div class="t r" style="right:86.75px;color:#e8603a;font-size:5.0px;transform:translateY(152.50px) scaleX(0.77);transform-origin:100% 50%;">-2.46</div>
<div class="t" style="left:8px;color:#151515;font-size:5.0px;transform:translateY(157.86px) scaleX(0.77);transform-origin:0 50%;">buy_limit:m15::ea_ptg_falco</div>
<div class="t r" style="right:572.50px;color:#151515;font-size:5.0px;transform:translateY(157.86px) scaleX(0.77);transform-origin:100% 50%;">3</div>
<div class="t r" style="right:546.25px;color:#e8603a;font-size:5.0px;transform:translateY(157.86px) scaleX(0.77);transform-origin:100% 50%;">-34.2</div>
<div class="t r" style="right:521.25px;color:#e8603a;font-size:5.0px;transform:translateY(157.86px) scaleX(0.77);transform-origin:100% 50%;">-7.66</div>
<div class="t r" style="right:495.50px;color:#151515;font-size:5.0px;transform:translateY(157.86px) scaleX(0.77);transform-origin:100% 50%;">0</div>
<div class="t r" style="right:470.00px;color:#151515;font-size:5.0px;transform:translateY(157.86px) scaleX(0.77);transform-origin:100% 50%;">0.0</div>
<div class="t r" style="right:443.75px;color:#151515;font-size:5.0px;transform:translateY(157.86px) scaleX(0.77);transform-origin:100% 50%;">0.00</div>
<div class="t r" style="right:418.75px;color:#151515;font-size:5.0px;transform:translateY(157.86px) scaleX(0.77);transform-origin:100% 50%;">3</div>
<div class="t r" style="right:393.00px;color:#151515;font-size:5.0px;transform:translateY(157.86px) scaleX(0.77);transform-origin:100% 50%;">2</div>
<div class="t r" style="right:367.50px;color:#151515;font-size:5.0px;transform:translateY(157.86px) scaleX(0.77);transform-origin:100% 50%;">0</div>
<div class="t r" style="right:342.00px;color:#e8603a;font-size:5.0px;transform:translateY(157.86px) scaleX(0.77);transform-origin:100% 50%;">-34.2</div>
<div class="t r" style="right:316.75px;color:#e8603a;font-size:5.0px;transform:translateY(157.86px) scaleX(0.77);transform-origin:100% 50%;">-7.66</div>
<div class="t r" style="right:290.75px;color:#e8603a;font-size:5.0px;transform:translateY(157.86px) scaleX(0.77);transform-origin:100% 50%;">-0.77</div>
<div class="t r" style="right:265.50px;color:#4a7ddb;font-size:5.0px;transform:translateY(157.86px) scaleX(0.77);transform-origin:100% 50%;">66.7%</div>
<div class="t r" style="right:240.00px;color:#e8603a;font-size:5.0px;transform:translateY(157.86px) scaleX(0.77);transform-origin:100% 50%;">-9.17</div>
<div class="t r" style="right:214.25px;color:#e8603a;font-size:5.0px;transform:translateY(157.86px) scaleX(0.77);transform-origin:100% 50%;">-0.84</div>
<div class="t r" style="right:188.75px;color:#cc3cc0;font-size:5.0px;transform:translateY(157.86px) scaleX(0.77);transform-origin:100% 50%;">0.16</div>
<div class="t r" style="right:163.00px;color:#4a7ddb;font-size:5.0px;transform:translateY(157.86px) scaleX(0.77);transform-origin:100% 50%;">0.85</div>
<div class="t r" style="right:137.50px;color:#e8603a;font-size:5.0px;transform:translateY(157.86px) scaleX(0.77);transform-origin:100% 50%;">-9.57</div>
<div class="t r" style="right:112.50px;color:#4a7ddb;font-size:5.0px;transform:translateY(157.86px) scaleX(0.77);transform-origin:100% 50%;">0.76</div>
<div class="t r" style="right:86.75px;color:#e8603a;font-size:5.0px;transform:translateY(157.86px) scaleX(0.77);transform-origin:100% 50%;">-9.57</div>
<div class="t" style="left:8px;color:#151515;font-size:5.0px;transform:translateY(163.23px) scaleX(0.77);transform-origin:0 50%;">buy_1:m15::ea_ptg_hawk</div>
<div class="t r" style="right:572.50px;color:#151515;font-size:5.0px;transform:translateY(163.23px) scaleX(0.77);transform-origin:100% 50%;">48</div>
<div class="t r" style="right:546.25px;color:#4a7ddb;font-size:5.0px;transform:translateY(163.23px) scaleX(0.77);transform-origin:100% 50%;">101.7</div>
<div class="t r" style="right:521.25px;color:#4a7ddb;font-size:5.0px;transform:translateY(163.23px) scaleX(0.77);transform-origin:100% 50%;">9.86</div>
<div class="t r" style="right:495.50px;color:#151515;font-size:5.0px;transform:translateY(163.23px) scaleX(0.77);transform-origin:100% 50%;">0</div>
<div class="t r" style="right:470.00px;color:#151515;font-size:5.0px;transform:translateY(163.23px) scaleX(0.77);transform-origin:100% 50%;">0.0</div>
<div class="t r" style="right:443.75px;color:#151515;font-size:5.0px;transform:translateY(163.23px) scaleX(0.77);transform-origin:100% 50%;">0.00</div>
<div class="t r" style="right:418.75px;color:#151515;font-size:5.0px;transform:translateY(163.23px) scaleX(0.77);transform-origin:100% 50%;">48</div>
<div class="t r" style="right:393.00px;color:#151515;font-size:5.0px;transform:translateY(163.23px) scaleX(0.77);transform-origin:100% 50%;">39</div>
<div class="t r" style="right:367.50px;color:#151515;font-size:5.0px;transform:translateY(163.23px) scaleX(0.77);transform-origin:100% 50%;">0</div>
<div class="t r" style="right:342.00px;color:#4a7ddb;font-size:5.0px;transform:translateY(163.23px) scaleX(0.77);transform-origin:100% 50%;">101.7</div>
<div class="t r" style="right:316.75px;color:#4a7ddb;font-size:5.0px;transform:translateY(163.23px) scaleX(0.77);transform-origin:100% 50%;">9.86</div>
<div class="t r" style="right:290.75px;color:#e8603a;font-size:5.0px;transform:translateY(163.23px) scaleX(0.77);transform-origin:100% 50%;">-3.49</div>
<div class="t r" style="right:265.50px;color:#4a7ddb;font-size:5.0px;transform:translateY(163.23px) scaleX(0.77);transform-origin:100% 50%;">81.3%</div>
<div class="t r" style="right:240.00px;color:#e8603a;font-size:5.0px;transform:translateY(163.23px) scaleX(0.77);transform-origin:100% 50%;">-15.99</div>
<div class="t r" style="right:214.25px;color:#cc3cc0;font-size:5.0px;transform:translateY(163.23px) scaleX(0.77);transform-origin:100% 50%;">0.41</div>
<div class="t r" style="right:188.75px;color:#cc3cc0;font-size:5.0px;transform:translateY(163.23px) scaleX(0.77);transform-origin:100% 50%;">1.25</div>
<div class="t r" style="right:163.00px;color:#4a7ddb;font-size:5.0px;transform:translateY(163.23px) scaleX(0.77);transform-origin:100% 50%;">2.29</div>
<div class="t r" style="right:137.50px;color:#e8603a;font-size:5.0px;transform:translateY(163.23px) scaleX(0.77);transform-origin:100% 50%;">-9.19</div>
<div class="t r" style="right:112.50px;color:#4a7ddb;font-size:5.0px;transform:translateY(163.23px) scaleX(0.77);transform-origin:100% 50%;">1.26</div>
<div class="t r" style="right:86.75px;color:#e8603a;font-size:5.0px;transform:translateY(163.23px) scaleX(0.77);transform-origin:100% 50%;">-4.37</div>
<div class="t" style="left:8px;color:#151515;font-size:5.0px;transform:translateY(168.59px) scaleX(0.77);transform-origin:0 50%;">buy_2:m15::ea_ptg_eagle</div>
<div class="t r" style="right:572.50px;color:#151515;font-size:5.0px;transform:translateY(168.59px) scaleX(0.77);transform-origin:100% 50%;">9</div>
<div class="t r" style="right:546.25px;color:#4a7ddb;font-size:5.0px;transform:translateY(168.59px) scaleX(0.77);transform-origin:100% 50%;">97.1</div>
<div class="t r" style="right:521.25px;color:#4a7ddb;font-size:5.0px;transform:translateY(168.59px) scaleX(0.77);transform-origin:100% 50%;">26.99</div>
<div class="t r" style="right:495.50px;color:#151515;font-size:5.0px;transform:translateY(168.59px) scaleX(0.77);transform-origin:100% 50%;">0</div>
<div class="t r" style="right:470.00px;color:#151515;font-size:5.0px;transform:translateY(168.59px) scaleX(0.77);transform-origin:100% 50%;">0.0</div>
<div class="t r" style="right:443.75px;color:#151515;font-size:5.0px;transform:translateY(168.59px) scaleX(0.77);transform-origin:100% 50%;">0.00</div>
<div class="t r" style="right:418.75px;color:#151515;font-size:5.0px;transform:translateY(168.59px) scaleX(0.77);transform-origin:100% 50%;">9</div>
<div class="t r" style="right:393.00px;color:#151515;font-size:5.0px;transform:translateY(168.59px) scaleX(0.77);transform-origin:100% 50%;">9</div>
<div class="t r" style="right:367.50px;color:#151515;font-size:5.0px;transform:translateY(168.59px) scaleX(0.77);transform-origin:100% 50%;">0</div>
<div class="t r" style="right:342.00px;color:#4a7ddb;font-size:5.0px;transform:translateY(168.59px) scaleX(0.77);transform-origin:100% 50%;">97.1</div>
<div class="t r" style="right:316.75px;color:#4a7ddb;font-size:5.0px;transform:translateY(168.59px) scaleX(0.77);transform-origin:100% 50%;">26.99</div>
<div class="t r" style="right:290.75px;color:#e8603a;font-size:5.0px;transform:translateY(168.59px) scaleX(0.77);transform-origin:100% 50%;">-0.35</div>
<div class="t r" style="right:265.50px;color:#4a7ddb;font-size:5.0px;transform:translateY(168.59px) scaleX(0.77);transform-origin:100% 50%;">100.0%</div>
<div class="t r" style="right:240.00px;color:#151515;font-size:5.0px;transform:translateY(168.59px) scaleX(0.77);transform-origin:100% 50%;">0.00</div>
<div class="t r" style="right:214.25px;color:#151515;font-size:5.0px;transform:translateY(168.59px) scaleX(0.77);transform-origin:100% 50%;">0.00</div>
<div class="t r" style="right:188.75px;color:#151515;font-size:5.0px;transform:translateY(168.59px) scaleX(0.77);transform-origin:100% 50%;">0.00</div>
<div class="t r" style="right:163.00px;color:#4a7ddb;font-size:5.0px;transform:translateY(168.59px) scaleX(0.77);transform-origin:100% 50%;">4.27</div>
<div class="t r" style="right:137.50px;color:#151515;font-size:5.0px;transform:translateY(168.59px) scaleX(0.77);transform-origin:100% 50%;">0.00</div>
<div class="t r" style="right:112.50px;color:#4a7ddb;font-size:5.0px;transform:translateY(168.59px) scaleX(0.77);transform-origin:100% 50%;">3.00</div>
<div class="t r" style="right:86.75px;color:#151515;font-size:5.0px;transform:translateY(168.59px) scaleX(0.77);transform-origin:100% 50%;">0.00</div>
<div class="t" style="left:8px;color:#151515;font-size:5.0px;transform:translateY(173.96px) scaleX(0.77);transform-origin:0 50%;">buy_limit:m15::ea_ptg_falcon</div>
<div class="t r" style="right:572.50px;color:#151515;font-size:5.0px;transform:translateY(173.96px) scaleX(0.77);transform-origin:100% 50%;">1</div>
<div class="t r" style="right:546.25px;color:#e8603a;font-size:5.0px;transform:translateY(173.96px) scaleX(0.77);transform-origin:100% 50%;">-38.3</div>
<div class="t r" style="right:521.25px;color:#e8603a;font-size:5.0px;transform:translateY(173.96px) scaleX(0.77);transform-origin:100% 50%;">-5.25</div>
<div class="t r" style="right:495.50px;color:#151515;font-size:5.0px;transform:translateY(173.96px) scaleX(0.77);transform-origin:100% 50%;">0</div>
<div class="t r" style="right:470.00px;color:#151515;font-size:5.0px;transform:translateY(173.96px) scaleX(0.77);transform-origin:100% 50%;">0.0</div>
<div class="t r" style="right:443.75px;color:#151515;font-size:5.0px;transform:translateY(173.96px) scaleX(0.77);transform-origin:100% 50%;">0.00</div>
<div class="t r" style="right:418.75px;color:#151515;font-size:5.0px;transform:translateY(173.96px) scaleX(0.77);transform-origin:100% 50%;">1</div>
<div class="t r" style="right:393.00px;color:#151515;font-size:5.0px;transform:translateY(173.96px) scaleX(0.77);transform-origin:100% 50%;">0</div>
<div class="t r" style="right:367.50px;color:#151515;font-size:5.0px;transform:translateY(173.96px) scaleX(0.77);transform-origin:100% 50%;">0</div>
<div class="t r" style="right:342.00px;color:#e8603a;font-size:5.0px;transform:translateY(173.96px) scaleX(0.77);transform-origin:100% 50%;">-38.3</div>
<div class="t r" style="right:316.75px;color:#e8603a;font-size:5.0px;transform:translateY(173.96px) scaleX(0.77);transform-origin:100% 50%;">-5.25</div>
<div class="t r" style="right:290.75px;color:#e8603a;font-size:5.0px;transform:translateY(173.96px) scaleX(0.77);transform-origin:100% 50%;">-0.17</div>
<div class="t r" style="right:265.50px;color:#151515;font-size:5.0px;transform:translateY(173.96px) scaleX(0.77);transform-origin:100% 50%;">0.0%</div>
<div class="t r" style="right:240.00px;color:#e8603a;font-size:5.0px;transform:translateY(173.96px) scaleX(0.77);transform-origin:100% 50%;">-5.25</div>
<div class="t r" style="right:214.25px;color:#e8603a;font-size:5.0px;transform:translateY(173.96px) scaleX(0.77);transform-origin:100% 50%;">-1.00</div>
<div class="t r" style="right:188.75px;color:#151515;font-size:5.0px;transform:translateY(173.96px) scaleX(0.77);transform-origin:100% 50%;">0.00</div>
<div class="t r" style="right:163.00px;color:#151515;font-size:5.0px;transform:translateY(173.96px) scaleX(0.77);transform-origin:100% 50%;">0.00</div>
<div class="t r" style="right:137.50px;color:#e8603a;font-size:5.0px;transform:translateY(173.96px) scaleX(0.77);transform-origin:100% 50%;">-5.25</div>
<div class="t r" style="right:112.50px;color:#151515;font-size:5.0px;transform:translateY(173.96px) scaleX(0.77);transform-origin:100% 50%;">0.00</div>
<div class="t r" style="right:86.75px;color:#e8603a;font-size:5.0px;transform:translateY(173.96px) scaleX(0.77);transform-origin:100% 50%;">-5.25</div>
<div class="t" style="left:8px;color:#151515;font-size:5.0px;transform:translateY(179.32px) scaleX(0.77);transform-origin:0 50%;">buy_2:m15::ea_ptg_hawk</div>
<div class="t r" style="right:572.50px;color:#151515;font-size:5.0px;transform:translateY(179.32px) scaleX(0.77);transform-origin:100% 50%;">9</div>
<div class="t r" style="right:546.25px;color:#4a7ddb;font-size:5.0px;transform:translateY(179.32px) scaleX(0.77);transform-origin:100% 50%;">239.7</div>
<div class="t r" style="right:521.25px;color:#4a7ddb;font-size:5.0px;transform:translateY(179.32px) scaleX(0.77);transform-origin:100% 50%;">48.66</div>
<div class="t r" style="right:495.50px;color:#151515;font-size:5.0px;transform:translateY(179.32px) scaleX(0.77);transform-origin:100% 50%;">0</div>
<div class="t r" style="right:470.00px;color:#151515;font-size:5.0px;transform:translateY(179.32px) scaleX(0.77);transform-origin:100% 50%;">0.0</div>
<div class="t r" style="right:443.75px;color:#151515;font-size:5.0px;transform:translateY(179.32px) scaleX(0.77);transform-origin:100% 50%;">0.00</div>
<div class="t r" style="right:418.75px;color:#151515;font-size:5.0px;transform:translateY(179.32px) scaleX(0.77);transform-origin:100% 50%;">9</div>
<div class="t r" style="right:393.00px;color:#151515;font-size:5.0px;transform:translateY(179.32px) scaleX(0.77);transform-origin:100% 50%;">9</div>
<div class="t r" style="right:367.50px;color:#151515;font-size:5.0px;transform:translateY(179.32px) scaleX(0.77);transform-origin:100% 50%;">0</div>
<div class="t r" style="right:342.00px;color:#4a7ddb;font-size:5.0px;transform:translateY(179.32px) scaleX(0.77);transform-origin:100% 50%;">239.7</div>
<div class="t r" style="right:316.75px;color:#4a7ddb;font-size:5.0px;transform:translateY(179.32px) scaleX(0.77);transform-origin:100% 50%;">48.66</div>
<div class="t r" style="right:290.75px;color:#e8603a;font-size:5.0px;transform:translateY(179.32px) scaleX(0.77);transform-origin:100% 50%;">-1.27</div>
<div class="t r" style="right:265.50px;color:#4a7ddb;font-size:5.0px;transform:translateY(179.32px) scaleX(0.77);transform-origin:100% 50%;">100.0%</div>
<div class="t r" style="right:240.00px;color:#151515;font-size:5.0px;transform:translateY(179.32px) scaleX(0.77);transform-origin:100% 50%;">0.00</div>
<div class="t r" style="right:214.25px;color:#151515;font-size:5.0px;transform:translateY(179.32px) scaleX(0.77);transform-origin:100% 50%;">0.00</div>
<div class="t r" style="right:188.75px;color:#151515;font-size:5.0px;transform:translateY(179.32px) scaleX(0.77);transform-origin:100% 50%;">0.00</div>
<div class="t r" style="right:163.00px;color:#4a7ddb;font-size:5.0px;transform:translateY(179.32px) scaleX(0.77);transform-origin:100% 50%;">10.45</div>
<div class="t r" style="right:137.50px;color:#151515;font-size:5.0px;transform:translateY(179.32px) scaleX(0.77);transform-origin:100% 50%;">0.00</div>
<div class="t r" style="right:112.50px;color:#4a7ddb;font-size:5.0px;transform:translateY(179.32px) scaleX(0.77);transform-origin:100% 50%;">5.41</div>
<div class="t r" style="right:86.75px;color:#151515;font-size:5.0px;transform:translateY(179.32px) scaleX(0.77);transform-origin:100% 50%;">0.00</div>
<div class="t" style="left:8px;color:#151515;font-size:5.0px;transform:translateY(184.69px) scaleX(0.77);transform-origin:0 50%;">buy:h1::ea_ptg_falcon</div>
<div class="t r" style="right:572.50px;color:#151515;font-size:5.0px;transform:translateY(184.69px) scaleX(0.77);transform-origin:100% 50%;">8</div>
<div class="t r" style="right:546.25px;color:#e8603a;font-size:5.0px;transform:translateY(184.69px) scaleX(0.77);transform-origin:100% 50%;">-240.2</div>
<div class="t r" style="right:521.25px;color:#e8603a;font-size:5.0px;transform:translateY(184.69px) scaleX(0.77);transform-origin:100% 50%;">-40.67</div>
<div class="t r" style="right:495.50px;color:#151515;font-size:5.0px;transform:translateY(184.69px) scaleX(0.77);transform-origin:100% 50%;">0</div>
<div class="t r" style="right:470.00px;color:#151515;font-size:5.0px;transform:translateY(184.69px) scaleX(0.77);transform-origin:100% 50%;">0.0</div>
<div class="t r" style="right:443.75px;color:#151515;font-size:5.0px;transform:translateY(184.69px) scaleX(0.77);transform-origin:100% 50%;">0.00</div>
<div class="t r" style="right:418.75px;color:#151515;font-size:5.0px;transform:translateY(184.69px) scaleX(0.77);transform-origin:100% 50%;">8</div>
<div class="t r" style="right:393.00px;color:#151515;font-size:5.0px;transform:translateY(184.69px) scaleX(0.77);transform-origin:100% 50%;">4</div>
<div class="t r" style="right:367.50px;color:#151515;font-size:5.0px;transform:translateY(184.69px) scaleX(0.77);transform-origin:100% 50%;">0</div>
<div class="t r" style="right:342.00px;color:#e8603a;font-size:5.0px;transform:translateY(184.69px) scaleX(0.77);transform-origin:100% 50%;">-240.2</div>
<div class="t r" style="right:316.75px;color:#e8603a;font-size:5.0px;transform:translateY(184.69px) scaleX(0.77);transform-origin:100% 50%;">-40.67</div>
<div class="t r" style="right:290.75px;color:#e8603a;font-size:5.0px;transform:translateY(184.69px) scaleX(0.77);transform-origin:100% 50%;">-1.07</div>
<div class="t r" style="right:265.50px;color:#4a7ddb;font-size:5.0px;transform:translateY(184.69px) scaleX(0.77);transform-origin:100% 50%;">50.0%</div>
<div class="t r" style="right:240.00px;color:#e8603a;font-size:5.0px;transform:translateY(184.69px) scaleX(0.77);transform-origin:100% 50%;">-58.51</div>
<div class="t r" style="right:214.25px;color:#e8603a;font-size:5.0px;transform:translateY(184.69px) scaleX(0.77);transform-origin:100% 50%;">-0.75</div>
<div class="t r" style="right:188.75px;color:#cc3cc0;font-size:5.0px;transform:translateY(184.69px) scaleX(0.77);transform-origin:100% 50%;">0.25</div>
<div class="t r" style="right:163.00px;color:#4a7ddb;font-size:5.0px;transform:translateY(184.69px) scaleX(0.77);transform-origin:100% 50%;">10.18</div>
<div class="t r" style="right:137.50px;color:#e8603a;font-size:5.0px;transform:translateY(184.69px) scaleX(0.77);transform-origin:100% 50%;">-24.62</div>
<div class="t r" style="right:112.50px;color:#4a7ddb;font-size:5.0px;transform:translateY(184.69px) scaleX(0.77);transform-origin:100% 50%;">3.71</div>
<div class="t r" style="right:86.75px;color:#e8603a;font-size:5.0px;transform:translateY(184.69px) scaleX(0.77);transform-origin:100% 50%;">-14.62</div>
<div class="t" style="left:8px;color:#151515;font-size:5.0px;transform:translateY(190.05px) scaleX(0.77);transform-origin:0 50%;">buy:m30::ea_ptg_falcon</div>
<div class="t r" style="right:572.50px;color:#151515;font-size:5.0px;transform:translateY(190.05px) scaleX(0.77);transform-origin:100% 50%;">6</div>
<div class="t r" style="right:546.25px;color:#e8603a;font-size:5.0px;transform:translateY(190.05px) scaleX(0.77);transform-origin:100% 50%;">-146.4</div>
<div class="t r" style="right:521.25px;color:#e8603a;font-size:5.0px;transform:translateY(190.05px) scaleX(0.77);transform-origin:100% 50%;">-21.12</div>
<div class="t r" style="right:495.50px;color:#151515;font-size:5.0px;transform:translateY(190.05px) scaleX(0.77);transform-origin:100% 50%;">0</div>
<div class="t r" style="right:470.00px;color:#151515;font-size:5.0px;transform:translateY(190.05px) scaleX(0.77);transform-origin:100% 50%;">0.0</div>
<div class="t r" style="right:443.75px;color:#151515;font-size:5.0px;transform:translateY(190.05px) scaleX(0.77);transform-origin:100% 50%;">0.00</div>
<div class="t r" style="right:418.75px;color:#151515;font-size:5.0px;transform:translateY(190.05px) scaleX(0.77);transform-origin:100% 50%;">6</div>
<div class="t r" style="right:393.00px;color:#151515;font-size:5.0px;transform:translateY(190.05px) scaleX(0.77);transform-origin:100% 50%;">3</div>
<div class="t r" style="right:367.50px;color:#151515;font-size:5.0px;transform:translateY(190.05px) scaleX(0.77);transform-origin:100% 50%;">0</div>
<div class="t r" style="right:342.00px;color:#e8603a;font-size:5.0px;transform:translateY(190.05px) scaleX(0.77);transform-origin:100% 50%;">-146.4</div>
<div class="t r" style="right:316.75px;color:#e8603a;font-size:5.0px;transform:translateY(190.05px) scaleX(0.77);transform-origin:100% 50%;">-21.12</div>
<div class="t r" style="right:290.75px;color:#e8603a;font-size:5.0px;transform:translateY(190.05px) scaleX(0.77);transform-origin:100% 50%;">-0.35</div>
<div class="t r" style="right:265.50px;color:#4a7ddb;font-size:5.0px;transform:translateY(190.05px) scaleX(0.77);transform-origin:100% 50%;">50.0%</div>
<div class="t r" style="right:240.00px;color:#e8603a;font-size:5.0px;transform:translateY(190.05px) scaleX(0.77);transform-origin:100% 50%;">-24.92</div>
<div class="t r" style="right:214.25px;color:#e8603a;font-size:5.0px;transform:translateY(190.05px) scaleX(0.77);transform-origin:100% 50%;">-0.85</div>
<div class="t r" style="right:188.75px;color:#cc3cc0;font-size:5.0px;transform:translateY(190.05px) scaleX(0.77);transform-origin:100% 50%;">0.27</div>
<div class="t r" style="right:163.00px;color:#4a7ddb;font-size:5.0px;transform:translateY(190.05px) scaleX(0.77);transform-origin:100% 50%;">3.92</div>
<div class="t r" style="right:137.50px;color:#e8603a;font-size:5.0px;transform:translateY(190.05px) scaleX(0.77);transform-origin:100% 50%;">-17.67</div>
<div class="t r" style="right:112.50px;color:#4a7ddb;font-size:5.0px;transform:translateY(190.05px) scaleX(0.77);transform-origin:100% 50%;">2.87</div>
<div class="t r" style="right:86.75px;color:#e8603a;font-size:5.0px;transform:translateY(190.05px) scaleX(0.77);transform-origin:100% 50%;">-9.61</div>
<div class="t" style="left:8px;color:#151515;font-size:5.0px;transform:translateY(195.42px) scaleX(0.77);transform-origin:0 50%;">buy_limit:m30::ea_ptg_falco</div>
<div class="t r" style="right:572.50px;color:#151515;font-size:5.0px;transform:translateY(195.42px) scaleX(0.77);transform-origin:100% 50%;">3</div>
<div class="t r" style="right:546.25px;color:#e8603a;font-size:5.0px;transform:translateY(195.42px) scaleX(0.77);transform-origin:100% 50%;">-54.9</div>
<div class="t r" style="right:521.25px;color:#e8603a;font-size:5.0px;transform:translateY(195.42px) scaleX(0.77);transform-origin:100% 50%;">-10.29</div>
<div class="t r" style="right:495.50px;color:#151515;font-size:5.0px;transform:translateY(195.42px) scaleX(0.77);transform-origin:100% 50%;">0</div>
<div class="t r" style="right:470.00px;color:#151515;font-size:5.0px;transform:translateY(195.42px) scaleX(0.77);transform-origin:100% 50%;">0.0</div>
<div class="t r" style="right:443.75px;color:#151515;font-size:5.0px;transform:translateY(195.42px) scaleX(0.77);transform-origin:100% 50%;">0.00</div>
<div class="t r" style="right:418.75px;color:#151515;font-size:5.0px;transform:translateY(195.42px) scaleX(0.77);transform-origin:100% 50%;">3</div>
<div class="t r" style="right:393.00px;color:#151515;font-size:5.0px;transform:translateY(195.42px) scaleX(0.77);transform-origin:100% 50%;">1</div>
<div class="t r" style="right:367.50px;color:#151515;font-size:5.0px;transform:translateY(195.42px) scaleX(0.77);transform-origin:100% 50%;">0</div>
<div class="t r" style="right:342.00px;color:#e8603a;font-size:5.0px;transform:translateY(195.42px) scaleX(0.77);transform-origin:100% 50%;">-54.9</div>
<div class="t r" style="right:316.75px;color:#e8603a;font-size:5.0px;transform:translateY(195.42px) scaleX(0.77);transform-origin:100% 50%;">-10.29</div>
<div class="t r" style="right:290.75px;color:#e8603a;font-size:5.0px;transform:translateY(195.42px) scaleX(0.77);transform-origin:100% 50%;">-0.35</div>
<div class="t r" style="right:265.50px;color:#cc3cc0;font-size:5.0px;transform:translateY(195.42px) scaleX(0.77);transform-origin:100% 50%;">33.3%</div>
<div class="t r" style="right:240.00px;color:#e8603a;font-size:5.0px;transform:translateY(195.42px) scaleX(0.77);transform-origin:100% 50%;">-11.85</div>
<div class="t r" style="right:214.25px;color:#e8603a;font-size:5.0px;transform:translateY(195.42px) scaleX(0.77);transform-origin:100% 50%;">-0.87</div>
<div class="t r" style="right:188.75px;color:#cc3cc0;font-size:5.0px;transform:translateY(195.42px) scaleX(0.77);transform-origin:100% 50%;">0.54</div>
<div class="t r" style="right:163.00px;color:#4a7ddb;font-size:5.0px;transform:translateY(195.42px) scaleX(0.77);transform-origin:100% 50%;">12.32</div>
<div class="t r" style="right:137.50px;color:#e8603a;font-size:5.0px;transform:translateY(195.42px) scaleX(0.77);transform-origin:100% 50%;">-11.85</div>
<div class="t r" style="right:112.50px;color:#4a7ddb;font-size:5.0px;transform:translateY(195.42px) scaleX(0.77);transform-origin:100% 50%;">12.32</div>
<div class="t r" style="right:86.75px;color:#e8603a;font-size:5.0px;transform:translateY(195.42px) scaleX(0.77);transform-origin:100% 50%;">-10.31</div>
<div class="t" style="left:8px;color:#151515;font-size:5.0px;transform:translateY(200.78px) scaleX(0.77);transform-origin:0 50%;">buy_limit:m30::ea_ptg_falcon</div>
<div class="t r" style="right:572.50px;color:#151515;font-size:5.0px;transform:translateY(200.78px) scaleX(0.77);transform-origin:100% 50%;">2</div>
<div class="t r" style="right:546.25px;color:#4a7ddb;font-size:5.0px;transform:translateY(200.78px) scaleX(0.77);transform-origin:100% 50%;">63.3</div>
<div class="t r" style="right:521.25px;color:#4a7ddb;font-size:5.0px;transform:translateY(200.78px) scaleX(0.77);transform-origin:100% 50%;">15.21</div>
<div class="t r" style="right:495.50px;color:#151515;font-size:5.0px;transform:translateY(200.78px) scaleX(0.77);transform-origin:100% 50%;">0</div>
<div class="t r" style="right:470.00px;color:#151515;font-size:5.0px;transform:translateY(200.78px) scaleX(0.77);transform-origin:100% 50%;">0.0</div>
<div class="t r" style="right:443.75px;color:#151515;font-size:5.0px;transform:translateY(200.78px) scaleX(0.77);transform-origin:100% 50%;">0.00</div>
<div class="t r" style="right:418.75px;color:#151515;font-size:5.0px;transform:translateY(200.78px) scaleX(0.77);transform-origin:100% 50%;">2</div>
<div class="t r" style="right:393.00px;color:#151515;font-size:5.0px;transform:translateY(200.78px) scaleX(0.77);transform-origin:100% 50%;">2</div>
<div class="t r" style="right:367.50px;color:#151515;font-size:5.0px;transform:translateY(200.78px) scaleX(0.77);transform-origin:100% 50%;">0</div>
<div class="t r" style="right:342.00px;color:#4a7ddb;font-size:5.0px;transform:translateY(200.78px) scaleX(0.77);transform-origin:100% 50%;">63.3</div>
<div class="t r" style="right:316.75px;color:#4a7ddb;font-size:5.0px;transform:translateY(200.78px) scaleX(0.77);transform-origin:100% 50%;">15.21</div>
<div class="t r" style="right:290.75px;color:#e8603a;font-size:5.0px;transform:translateY(200.78px) scaleX(0.77);transform-origin:100% 50%;">-0.18</div>
<div class="t r" style="right:265.50px;color:#4a7ddb;font-size:5.0px;transform:translateY(200.78px) scaleX(0.77);transform-origin:100% 50%;">100.0%</div>
<div class="t r" style="right:240.00px;color:#151515;font-size:5.0px;transform:translateY(200.78px) scaleX(0.77);transform-origin:100% 50%;">0.00</div>
<div class="t r" style="right:214.25px;color:#151515;font-size:5.0px;transform:translateY(200.78px) scaleX(0.77);transform-origin:100% 50%;">0.00</div>
<div class="t r" style="right:188.75px;color:#151515;font-size:5.0px;transform:translateY(200.78px) scaleX(0.77);transform-origin:100% 50%;">0.00</div>
<div class="t r" style="right:163.00px;color:#4a7ddb;font-size:5.0px;transform:translateY(200.78px) scaleX(0.77);transform-origin:100% 50%;">8.55</div>
<div class="t r" style="right:137.50px;color:#151515;font-size:5.0px;transform:translateY(200.78px) scaleX(0.77);transform-origin:100% 50%;">0.00</div>
<div class="t r" style="right:112.50px;color:#4a7ddb;font-size:5.0px;transform:translateY(200.78px) scaleX(0.77);transform-origin:100% 50%;">7.61</div>
<div class="t r" style="right:86.75px;color:#151515;font-size:5.0px;transform:translateY(200.78px) scaleX(0.77);transform-origin:100% 50%;">0.00</div>
<div class="t" style="left:8px;color:#151515;font-size:5.0px;transform:translateY(206.15px) scaleX(0.77);transform-origin:0 50%;">buy_limit:h1::ea_ptg_falcon</div>
<div class="t r" style="right:572.50px;color:#151515;font-size:5.0px;transform:translateY(206.15px) scaleX(0.77);transform-origin:100% 50%;">5</div>
<div class="t r" style="right:546.25px;color:#e8603a;font-size:5.0px;transform:translateY(206.15px) scaleX(0.77);transform-origin:100% 50%;">-45.3</div>
<div class="t r" style="right:521.25px;color:#e8603a;font-size:5.0px;transform:translateY(206.15px) scaleX(0.77);transform-origin:100% 50%;">-13.82</div>
<div class="t r" style="right:495.50px;color:#151515;font-size:5.0px;transform:translateY(206.15px) scaleX(0.77);transform-origin:100% 50%;">0</div>
<div class="t r" style="right:470.00px;color:#151515;font-size:5.0px;transform:translateY(206.15px) scaleX(0.77);transform-origin:100% 50%;">0.0</div>
<div class="t r" style="right:443.75px;color:#151515;font-size:5.0px;transform:translateY(206.15px) scaleX(0.77);transform-origin:100% 50%;">0.00</div>
<div class="t r" style="right:418.75px;color:#151515;font-size:5.0px;transform:translateY(206.15px) scaleX(0.77);transform-origin:100% 50%;">5</div>
<div class="t r" style="right:393.00px;color:#151515;font-size:5.0px;transform:translateY(206.15px) scaleX(0.77);transform-origin:100% 50%;">3</div>
<div class="t r" style="right:367.50px;color:#151515;font-size:5.0px;transform:translateY(206.15px) scaleX(0.77);transform-origin:100% 50%;">0</div>
<div class="t r" style="right:342.00px;color:#e8603a;font-size:5.0px;transform:translateY(206.15px) scaleX(0.77);transform-origin:100% 50%;">-45.3</div>
<div class="t r" style="right:316.75px;color:#e8603a;font-size:5.0px;transform:translateY(206.15px) scaleX(0.77);transform-origin:100% 50%;">-13.82</div>
<div class="t r" style="right:290.75px;color:#e8603a;font-size:5.0px;transform:translateY(206.15px) scaleX(0.77);transform-origin:100% 50%;">-0.45</div>
<div class="t r" style="right:265.50px;color:#4a7ddb;font-size:5.0px;transform:translateY(206.15px) scaleX(0.77);transform-origin:100% 50%;">60.0%</div>
<div class="t r" style="right:240.00px;color:#e8603a;font-size:5.0px;transform:translateY(206.15px) scaleX(0.77);transform-origin:100% 50%;">-35.38</div>
<div class="t r" style="right:214.25px;color:#e8603a;font-size:5.0px;transform:translateY(206.15px) scaleX(0.77);transform-origin:100% 50%;">-0.39</div>
<div class="t r" style="right:188.75px;color:#cc3cc0;font-size:5.0px;transform:translateY(206.15px) scaleX(0.77);transform-origin:100% 50%;">0.68</div>
<div class="t r" style="right:163.00px;color:#4a7ddb;font-size:5.0px;transform:translateY(206.15px) scaleX(0.77);transform-origin:100% 50%;">13.41</div>
<div class="t r" style="right:137.50px;color:#e8603a;font-size:5.0px;transform:translateY(206.15px) scaleX(0.77);transform-origin:100% 50%;">-25.56</div>
<div class="t r" style="right:112.50px;color:#4a7ddb;font-size:5.0px;transform:translateY(206.15px) scaleX(0.77);transform-origin:100% 50%;">9.71</div>
<div class="t r" style="right:86.75px;color:#e8603a;font-size:5.0px;transform:translateY(206.15px) scaleX(0.77);transform-origin:100% 50%;">-21.47</div>
<div class="t" style="left:8px;color:#151515;font-size:5.0px;transform:translateY(211.51px) scaleX(0.77);transform-origin:0 50%;">buy_1:m15::ea_ptg_buzzard</div>
<div class="t r" style="right:572.50px;color:#151515;font-size:5.0px;transform:translateY(211.51px) scaleX(0.77);transform-origin:100% 50%;">34</div>
<div class="t r" style="right:546.25px;color:#4a7ddb;font-size:5.0px;transform:translateY(211.51px) scaleX(0.77);transform-origin:100% 50%;">233.2</div>
<div class="t r" style="right:521.25px;color:#4a7ddb;font-size:5.0px;transform:translateY(211.51px) scaleX(0.77);transform-origin:100% 50%;">30.17</div>
<div class="t r" style="right:495.50px;color:#151515;font-size:5.0px;transform:translateY(211.51px) scaleX(0.77);transform-origin:100% 50%;">0</div>
<div class="t r" style="right:470.00px;color:#151515;font-size:5.0px;transform:translateY(211.51px) scaleX(0.77);transform-origin:100% 50%;">0.0</div>
<div class="t r" style="right:443.75px;color:#151515;font-size:5.0px;transform:translateY(211.51px) scaleX(0.77);transform-origin:100% 50%;">0.00</div>
<div class="t r" style="right:418.75px;color:#151515;font-size:5.0px;transform:translateY(211.51px) scaleX(0.77);transform-origin:100% 50%;">34</div>
<div class="t r" style="right:393.00px;color:#151515;font-size:5.0px;transform:translateY(211.51px) scaleX(0.77);transform-origin:100% 50%;">33</div>
<div class="t r" style="right:367.50px;color:#151515;font-size:5.0px;transform:translateY(211.51px) scaleX(0.77);transform-origin:100% 50%;">0</div>
<div class="t r" style="right:342.00px;color:#4a7ddb;font-size:5.0px;transform:translateY(211.51px) scaleX(0.77);transform-origin:100% 50%;">233.2</div>
<div class="t r" style="right:316.75px;color:#4a7ddb;font-size:5.0px;transform:translateY(211.51px) scaleX(0.77);transform-origin:100% 50%;">30.17</div>
<div class="t r" style="right:290.75px;color:#e8603a;font-size:5.0px;transform:translateY(211.51px) scaleX(0.77);transform-origin:100% 50%;">-3.43</div>
<div class="t r" style="right:265.50px;color:#4a7ddb;font-size:5.0px;transform:translateY(211.51px) scaleX(0.77);transform-origin:100% 50%;">97.1%</div>
<div class="t r" style="right:240.00px;color:#e8603a;font-size:5.0px;transform:translateY(211.51px) scaleX(0.77);transform-origin:100% 50%;">-10.77</div>
<div class="t r" style="right:214.25px;color:#cc3cc0;font-size:5.0px;transform:translateY(211.51px) scaleX(0.77);transform-origin:100% 50%;">2.80</div>
<div class="t r" style="right:188.75px;color:#4a7ddb;font-size:5.0px;transform:translateY(211.51px) scaleX(0.77);transform-origin:100% 50%;">3.00</div>
<div class="t r" style="right:163.00px;color:#4a7ddb;font-size:5.0px;transform:translateY(211.51px) scaleX(0.77);transform-origin:100% 50%;">1.82</div>
<div class="t r" style="right:137.50px;color:#e8603a;font-size:5.0px;transform:translateY(211.51px) scaleX(0.77);transform-origin:100% 50%;">-10.77</div>
<div class="t r" style="right:112.50px;color:#4a7ddb;font-size:5.0px;transform:translateY(211.51px) scaleX(0.77);transform-origin:100% 50%;">1.26</div>
<div class="t r" style="right:86.75px;color:#e8603a;font-size:5.0px;transform:translateY(211.51px) scaleX(0.77);transform-origin:100% 50%;">-10.77</div>
<div class="t" style="left:8px;color:#151515;font-size:5.0px;transform:translateY(216.88px) scaleX(0.77);transform-origin:0 50%;">buy_2:m15::ea_ptg_buzzard</div>
<div class="t r" style="right:572.50px;color:#151515;font-size:5.0px;transform:translateY(216.88px) scaleX(0.77);transform-origin:100% 50%;">1</div>
<div class="t r" style="right:546.25px;color:#4a7ddb;font-size:5.0px;transform:translateY(216.88px) scaleX(0.77);transform-origin:100% 50%;">34.9</div>
<div class="t r" style="right:521.25px;color:#4a7ddb;font-size:5.0px;transform:translateY(216.88px) scaleX(0.77);transform-origin:100% 50%;">11.73</div>
<div class="t r" style="right:495.50px;color:#151515;font-size:5.0px;transform:translateY(216.88px) scaleX(0.77);transform-origin:100% 50%;">0</div>
<div class="t r" style="right:470.00px;color:#151515;font-size:5.0px;transform:translateY(216.88px) scaleX(0.77);transform-origin:100% 50%;">0.0</div>
<div class="t r" style="right:443.75px;color:#151515;font-size:5.0px;transform:translateY(216.88px) scaleX(0.77);transform-origin:100% 50%;">0.00</div>
<div class="t r" style="right:418.75px;color:#151515;font-size:5.0px;transform:translateY(216.88px) scaleX(0.77);transform-origin:100% 50%;">1</div>
<div class="t r" style="right:393.00px;color:#151515;font-size:5.0px;transform:translateY(216.88px) scaleX(0.77);transform-origin:100% 50%;">1</div>
<div class="t r" style="right:367.50px;color:#151515;font-size:5.0px;transform:translateY(216.88px) scaleX(0.77);transform-origin:100% 50%;">0</div>
<div class="t r" style="right:342.00px;color:#4a7ddb;font-size:5.0px;transform:translateY(216.88px) scaleX(0.77);transform-origin:100% 50%;">34.9</div>
<div class="t r" style="right:316.75px;color:#4a7ddb;font-size:5.0px;transform:translateY(216.88px) scaleX(0.77);transform-origin:100% 50%;">11.73</div>
<div class="t r" style="right:290.75px;color:#4a7ddb;font-size:5.0px;transform:translateY(216.88px) scaleX(0.77);transform-origin:100% 50%;">0.31</div>
<div class="t r" style="right:265.50px;color:#4a7ddb;font-size:5.0px;transform:translateY(216.88px) scaleX(0.77);transform-origin:100% 50%;">100.0%</div>
<div class="t r" style="right:240.00px;color:#151515;font-size:5.0px;transform:translateY(216.88px) scaleX(0.77);transform-origin:100% 50%;">0.00</div>
<div class="t r" style="right:214.25px;color:#151515;font-size:5.0px;transform:translateY(216.88px) scaleX(0.77);transform-origin:100% 50%;">0.00</div>
<div class="t r" style="right:188.75px;color:#151515;font-size:5.0px;transform:translateY(216.88px) scaleX(0.77);transform-origin:100% 50%;">0.00</div>
<div class="t r" style="right:163.00px;color:#4a7ddb;font-size:5.0px;transform:translateY(216.88px) scaleX(0.77);transform-origin:100% 50%;">11.73</div>
<div class="t r" style="right:137.50px;color:#151515;font-size:5.0px;transform:translateY(216.88px) scaleX(0.77);transform-origin:100% 50%;">0.00</div>
<div class="t r" style="right:112.50px;color:#4a7ddb;font-size:5.0px;transform:translateY(216.88px) scaleX(0.77);transform-origin:100% 50%;">11.73</div>
<div class="t r" style="right:86.75px;color:#151515;font-size:5.0px;transform:translateY(216.88px) scaleX(0.77);transform-origin:100% 50%;">0.00</div>
<div class="t" style="left:8px;color:#151515;font-size:5.0px;transform:translateY(222.24px) scaleX(0.77);transform-origin:0 50%;">sum/avg</div>
<div class="t r" style="right:572.50px;color:#151515;font-size:5.0px;transform:translateY(222.24px) scaleX(0.77);transform-origin:100% 50%;">189</div>
<div class="t r" style="right:546.25px;color:#151515;font-size:5.0px;transform:translateY(222.24px) scaleX(0.77);transform-origin:100% 50%;">406.4</div>
<div class="t r" style="right:521.25px;color:#151515;font-size:5.0px;transform:translateY(222.24px) scaleX(0.77);transform-origin:100% 50%;">70.24</div>
<div class="t r" style="right:495.50px;color:#151515;font-size:5.0px;transform:translateY(222.24px) scaleX(0.77);transform-origin:100% 50%;">0</div>
<div class="t r" style="right:470.00px;color:#151515;font-size:5.0px;transform:translateY(222.24px) scaleX(0.77);transform-origin:100% 50%;">0.0</div>
<div class="t r" style="right:443.75px;color:#151515;font-size:5.0px;transform:translateY(222.24px) scaleX(0.77);transform-origin:100% 50%;">0.00</div>
<div class="t r" style="right:418.75px;color:#151515;font-size:5.0px;transform:translateY(222.24px) scaleX(0.77);transform-origin:100% 50%;">189</div>
<div class="t r" style="right:393.00px;color:#151515;font-size:5.0px;transform:translateY(222.24px) scaleX(0.77);transform-origin:100% 50%;">152</div>
<div class="t r" style="right:367.50px;color:#151515;font-size:5.0px;transform:translateY(222.24px) scaleX(0.77);transform-origin:100% 50%;">0</div>
<div class="t r" style="right:342.00px;color:#151515;font-size:5.0px;transform:translateY(222.24px) scaleX(0.77);transform-origin:100% 50%;">406.4</div>
<div class="t r" style="right:316.75px;color:#151515;font-size:5.0px;transform:translateY(222.24px) scaleX(0.77);transform-origin:100% 50%;">70.24</div>
<div class="t r" style="right:290.75px;color:#151515;font-size:5.0px;transform:translateY(222.24px) scaleX(0.77);transform-origin:100% 50%;">-15.87</div>
<div class="t r" style="right:265.50px;color:#151515;font-size:5.0px;transform:translateY(222.24px) scaleX(0.77);transform-origin:100% 50%;">80.4%</div>
<div class="t r" style="right:240.00px;color:#151515;font-size:5.0px;transform:translateY(222.24px) scaleX(0.77);transform-origin:100% 50%;">14.19</div>
<div class="t r" style="right:214.25px;color:#151515;font-size:5.0px;transform:translateY(222.24px) scaleX(0.77);transform-origin:100% 50%;">0.26</div>
<div class="t r" style="right:188.75px;color:#151515;font-size:5.0px;transform:translateY(222.24px) scaleX(0.77);transform-origin:100% 50%;">0.76</div>
<div class="t r" style="right:163.00px;color:#151515;font-size:5.0px;transform:translateY(222.24px) scaleX(0.77);transform-origin:100% 50%;">5.89</div>
<div class="t r" style="right:137.50px;color:#151515;font-size:5.0px;transform:translateY(222.24px) scaleX(0.77);transform-origin:100% 50%;">-0.60</div>
<div class="t r" style="right:112.50px;color:#151515;font-size:5.0px;transform:translateY(222.24px) scaleX(0.77);transform-origin:100% 50%;">4.42</div>
<div class="t r" style="right:86.75px;color:#151515;font-size:5.0px;transform:translateY(222.24px) scaleX(0.77);transform-origin:100% 50%;">-6.49</div>
</body></html>
